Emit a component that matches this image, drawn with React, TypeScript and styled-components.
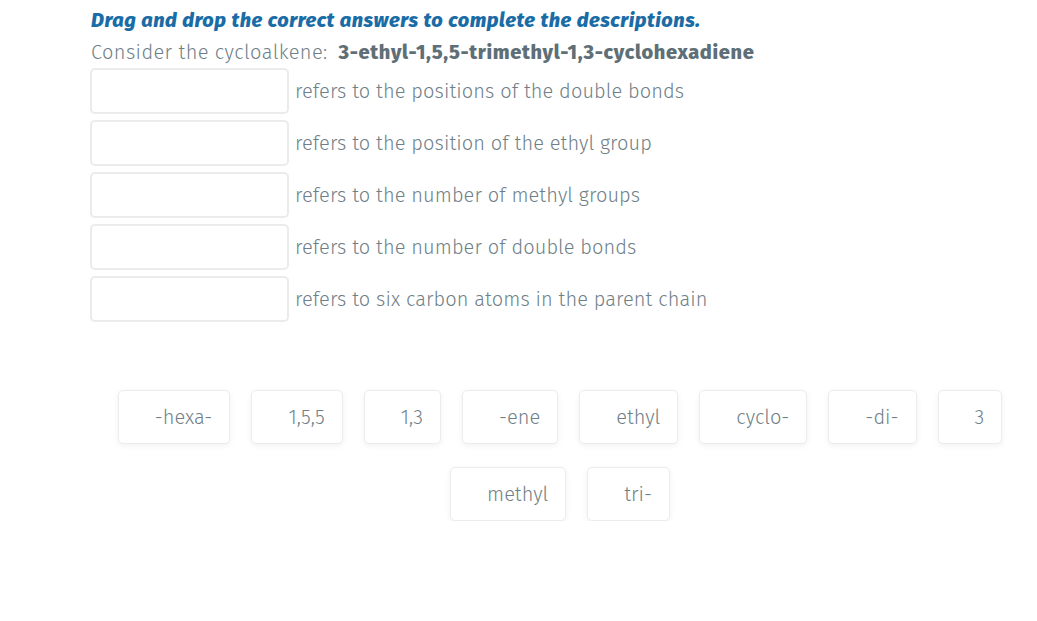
import React from 'react';
import styled, { createGlobalStyle } from 'styled-components';

const GlobalStyle = createGlobalStyle`
  body {
    margin: 0;
    background: #ffffff;
    font-family: 'Fira Sans', 'Open Sans', 'Noto Sans', sans-serif;
  }
`;

const descriptions = [
  'refers to the positions of the double bonds',
  'refers to the position of the ethyl group',
  'refers to the number of methyl groups',
  'refers to the number of double bonds',
  'refers to six carbon atoms in the parent chain',
];

const answers = ['-hexa-', '1,5,5', '1,3', '-ene', 'ethyl', 'cyclo-', '-di-', '3', 'methyl', 'tri-'];

const App = () => {
  return (
    <Page>
      <GlobalStyle />
      <Title>Drag and drop the correct answers to complete the descriptions.</Title>
      <Prompt>
        Consider the cycloalkene: <Compound>3-ethyl-1,5,5-trimethyl-1,3-cyclohexadiene</Compound>
      </Prompt>
      <Rows>
        {descriptions.map((text) => (
          <Row key={text}>
            <DropZone />
            <RowText>{text}</RowText>
          </Row>
        ))}
      </Rows>
      <Bank>
        {answers.map((a) => (
          <Tile key={a}>{a}</Tile>
        ))}
      </Bank>
    </Page>
  );
};
export default App;

const Page = styled.div`
  padding: 8px 0 0 90px;
  width: 940px;
`;
const Title = styled.h1`
  margin: 0 0 0 1px;
  font-size: 20px;
  line-height: 24px;
  font-weight: 800;
  font-style: italic;
  color: #1a6ca6;
  letter-spacing: 0.55px;
`;
const Prompt = styled.p`
  margin: 6px 0 0 1px;
  font-size: 20px;
  line-height: 28px;
  font-weight: 300;
  color: #6f7f88;
  letter-spacing: 0.4px;
`;
const Compound = styled.span`
  margin-left: 5px;
  font-weight: 800;
  color: #5f6f77;
  letter-spacing: 0.65px;
`;
const Rows = styled.div`
  margin-top: 2px;
  display: flex;
  flex-direction: column;
  gap: 6px;
`;
const Row = styled.div`
  display: flex;
  align-items: center;
  gap: 6px;
`;
const DropZone = styled.div`
  width: 195px;
  height: 42px;
  border: 2px solid #ebebeb;
  border-radius: 5px;
  background: #fff;
`;
const RowText = styled.span`
  font-size: 20px;
  font-weight: 300;
  color: #6f7f88;
  letter-spacing: 0.1px;
`;
const Bank = styled.div`
  margin-top: 68px;
  display: flex;
  flex-wrap: wrap;
  justify-content: center;
  column-gap: 21px;
  row-gap: 23px;
`;
const Tile = styled.div`
  height: 54px;
  box-sizing: border-box;
  display: flex;
  align-items: center;
  padding: 0 17px 0 36px;
  background: #fff;
  border: 1px solid #ececec;
  border-radius: 5px;
  box-shadow: 0 2px 6px rgba(0, 0, 0, 0.06);
  font-size: 20px;
  font-weight: 300;
  color: #6f7f88;
`;
